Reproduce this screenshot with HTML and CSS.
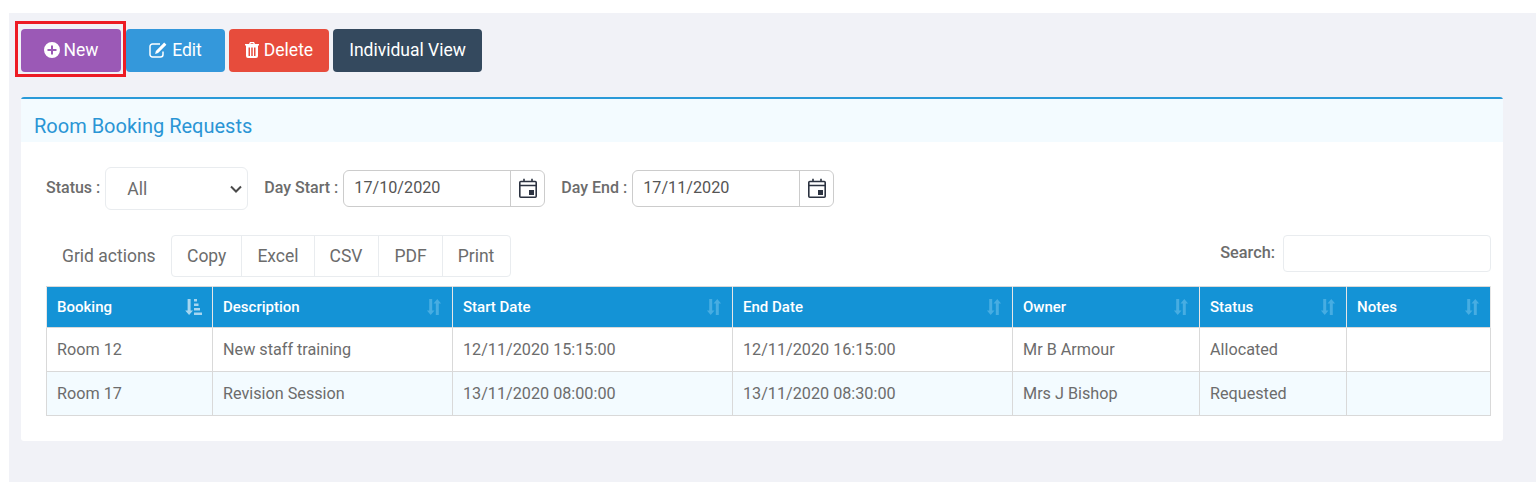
FILE: index.html
```html
<!DOCTYPE html>
<html lang="en">
<head>
    <meta charset="UTF-8">
    <title>Room Booking Requests</title>
    <link rel="stylesheet" href="styles.css">
</head>
<body>
    <div class="page">
        <div class="toolbar">
            <button class="btn btn-new">
                <svg class="btn-icon" viewBox="0 0 16 16"><path fill="currentColor" fill-rule="evenodd" d="M8 0a8 8 0 1 1 0 16A8 8 0 0 1 8 0zM7 3.500v3.500H3.500v2H7v3.500h2V9h3.500V7H9V3.500z"/></svg>
                <span class="btn-text">New</span>
            </button>
            <button class="btn btn-edit">
                <svg class="btn-icon btn-icon-wide" viewBox="0 0 18 16"><path fill="none" stroke="currentColor" stroke-width="1.500" d="M14 9.500v3a2.500 2.500 0 0 1-2.500 2.500h-8A2.500 2.500 0 0 1 1 12.500v-8A2.500 2.500 0 0 1 3.500 2H11"/><path fill="currentColor" d="M15.200 .6l2.200 2.200-8.300 8.300-3 .8.800-3z"/></svg>
                <span class="btn-text">Edit</span>
            </button>
            <button class="btn btn-delete">
                <svg class="btn-icon btn-icon-trash" viewBox="0 0 14 16"><path fill="currentColor" fill-rule="evenodd" d="M5 0h4l1 2h4v1.500h-1V14a2 2 0 0 1-2 2H3a2 2 0 0 1-2-2V3.500H0V2h4zM5.500 2h3L8.200 1.200H5.800zM3.500 5.500V14h1.500V5.500zM6.250 5.500V14h1.500V5.500zM9 5.500V14h1.500V5.500z"/></svg>
                <span class="btn-text">Delete</span>
            </button>
            <button class="btn btn-view"><span class="btn-text">Individual View</span></button>
        </div>

        <div class="panel">
            <div class="panel-head">Room Booking Requests</div>
            <div class="panel-body">
                <div class="filters">
                    <label class="filter-label">Status :</label>
                    <div class="status-select">
                        <span>All</span>
                        <svg class="chevron" viewBox="0 0 12 8"><path fill="none" stroke="currentColor" stroke-width="2" d="M1 1.500l5 5 5-5"/></svg>
                    </div>
                    <label class="filter-label label-gap">Day Start :</label>
                    <div class="date-group">
                        <div class="date-value">17/10/2020</div>
                        <div class="date-addon">
                            <svg class="cal" viewBox="0 0 18 20"><path fill="none" stroke="#2b3240" stroke-width="1.600" d="M1.800 3.500h14.400a1 1 0 0 1 1 1v13.700a1 1 0 0 1-1 1H1.800a1 1 0 0 1-1-1V4.500a1 1 0 0 1 1-1zM1 7.500h16M5 .8v3M13 .8v3"/><path fill="#2b3240" d="M10 12h5v5h-5z"/></svg>
                        </div>
                    </div>
                    <label class="filter-label label-gap">Day End :</label>
                    <div class="date-group">
                        <div class="date-value">17/11/2020</div>
                        <div class="date-addon">
                            <svg class="cal" viewBox="0 0 18 20"><path fill="none" stroke="#2b3240" stroke-width="1.600" d="M1.800 3.500h14.400a1 1 0 0 1 1 1v13.700a1 1 0 0 1-1 1H1.800a1 1 0 0 1-1-1V4.500a1 1 0 0 1 1-1zM1 7.500h16M5 .8v3M13 .8v3"/><path fill="#2b3240" d="M10 12h5v5h-5z"/></svg>
                        </div>
                    </div>
                </div>

                <div class="grid-actions">
                    <span class="grid-title">Grid actions</span>
                    <div class="grid-buttons">
                        <span class="grid-btn">Copy</span>
                        <span class="grid-btn">Excel</span>
                        <span class="grid-btn">CSV</span>
                        <span class="grid-btn">PDF</span>
                        <span class="grid-btn">Print</span>
                    </div>
                    <label class="search-label">Search:</label>
                    <div class="search-box"></div>
                </div>

                <table class="grid">
                    <colgroup>
                        <col class="col-1"><col class="col-2"><col class="col-3"><col class="col-4"><col class="col-5"><col class="col-6"><col class="col-7">
                    </colgroup>
                    <thead>
                        <tr>
                            <th><div class="th-inner">Booking<svg class="sort sort-active" viewBox="0 0 18 16"><path d="M3.600 0h3v11.500h2.400L5.100 16 1.200 11.500h2.400zM10 0h3v2.500h-3zM10 4.500h4.500V7H10zM10 9h6v2.500h-6zM10 13.500h8V16h-8z"/></svg></div></th>
                            <th><div class="th-inner">Description<svg class="sort" viewBox="0 0 16 16"><path d="M3.200 0h3v11.500h2.300L4.700 16 .9 11.500h2.300zM9.800 16h3V4.500h2.300L11.300 0 7.500 4.500h2.300z"/></svg></div></th>
                            <th><div class="th-inner">Start Date<svg class="sort" viewBox="0 0 16 16"><path d="M3.200 0h3v11.500h2.300L4.700 16 .9 11.500h2.300zM9.800 16h3V4.500h2.300L11.300 0 7.500 4.500h2.300z"/></svg></div></th>
                            <th><div class="th-inner">End Date<svg class="sort" viewBox="0 0 16 16"><path d="M3.200 0h3v11.500h2.300L4.700 16 .9 11.500h2.300zM9.800 16h3V4.500h2.300L11.300 0 7.500 4.500h2.300z"/></svg></div></th>
                            <th><div class="th-inner">Owner<svg class="sort" viewBox="0 0 16 16"><path d="M3.200 0h3v11.500h2.300L4.700 16 .9 11.500h2.300zM9.800 16h3V4.500h2.300L11.300 0 7.500 4.500h2.300z"/></svg></div></th>
                            <th><div class="th-inner">Status<svg class="sort" viewBox="0 0 16 16"><path d="M3.200 0h3v11.500h2.300L4.700 16 .9 11.500h2.300zM9.800 16h3V4.500h2.300L11.300 0 7.500 4.500h2.300z"/></svg></div></th>
                            <th><div class="th-inner">Notes<svg class="sort" viewBox="0 0 16 16"><path d="M3.200 0h3v11.500h2.300L4.700 16 .9 11.500h2.300zM9.800 16h3V4.500h2.300L11.300 0 7.500 4.500h2.300z"/></svg></div></th>
                        </tr>
                    </thead>
                    <tbody>
                        <tr>
                            <td>Room 12</td>
                            <td>New staff training</td>
                            <td>12/11/2020 15:15:00</td>
                            <td>12/11/2020 16:15:00</td>
                            <td>Mr B Armour</td>
                            <td>Allocated</td>
                            <td></td>
                        </tr>
                        <tr class="row-alt">
                            <td>Room 17</td>
                            <td>Revision Session</td>
                            <td>13/11/2020 08:00:00</td>
                            <td>13/11/2020 08:30:00</td>
                            <td>Mrs J Bishop</td>
                            <td>Requested</td>
                            <td></td>
                        </tr>
                    </tbody>
                </table>
            </div>
        </div>
    </div>
</body>
</html>
```

FILE: styles.css
```css
html, body {
    margin: 0;
    background-color: #fff;
}
body {
    font-family: Roboto, "Liberation Sans", sans-serif;
    font-size: 16.2px;
    color: #6c6c6c;
    height: 503px;
    overflow: hidden;
}
.page {
    margin: 13px 0 0 9px;
    padding: 16px 33px 41px 12px;
    background-color: #f1f2f7;
}
.toolbar {
    display: flex;
    gap: 4px;
    margin-bottom: 25px;
}
.btn {
    position: relative;
    height: 43px;
    border: none;
    border-radius: 4px;
    color: #fff;
    font-family: inherit;
    font-size: 17.5px;
    display: flex;
    align-items: center;
    justify-content: center;
    gap: 4px;
    padding: 0;
}
.btn-text {
    margin-top: -2px;
}
.btn-icon {
    width: 16px;
    height: 16px;
    margin-top: -2px;
}
.btn-icon-wide {
    width: 18px;
}
.btn-icon-trash {
    width: 14px;
}
.btn-new {
    width: 100px;
    background-color: #9b59b6;
}
/* red highlight drawn around the first button */
.btn-new:after {
    content: "";
    position: absolute;
    top: -8px;
    left: -6px;
    right: -5px;
    bottom: -5px;
    border: 3px solid #ed1c24;
}
.btn-edit {
    width: 99px;
    margin-left: 1px;
    gap: 5px;
    background-color: #3498db;
}
.btn-delete {
    width: 100px;
    gap: 5px;
    background-color: #e74c3c;
}
.btn-view {
    width: 149px;
    background-color: #34495e;
}
.panel {
    border-top: 2px solid #2a9ad8;
    border-radius: 3px;
    background-color: #fff;
}
.panel-head {
    height: 43px;
    padding: 16px 13px 0;
    box-sizing: border-box;
    background-color: #f3fbff;
    color: #2a95d5;
    font-size: 20px;
    line-height: 23px;
}
.panel-body {
    padding: 25px 12px 25px 25px;
}
.filters {
    display: flex;
    align-items: center;
    height: 43px;
}
.filter-label {
    font-size: 16px;
    font-weight: 500;
    margin-right: 5px;
    margin-top: -3px;
}
.label-gap {
    margin-left: 16px;
}
.status-select {
    width: 143px;
    height: 43px;
    box-sizing: border-box;
    border: 1px solid #e9ecef;
    border-radius: 6px;
    display: flex;
    align-items: center;
    justify-content: space-between;
    padding: 0 5px 0 21px;
    font-size: 17.5px;
}
.chevron {
    width: 12px;
    height: 8px;
    color: #4a4a4a;
}
.date-group {
    display: flex;
    height: 37px;
    box-sizing: border-box;
    border: 1px solid #ccc;
    border-radius: 6px;
}
.date-value {
    width: 166px;
    padding-left: 10px;
    box-sizing: border-box;
    line-height: 33px;
    color: #555;
}
.date-addon {
    width: 33px;
    border-left: 1px solid #ccc;
    display: flex;
    align-items: center;
    justify-content: center;
}
.cal {
    width: 18px;
    height: 20px;
    margin: -2px 0 0 1px;
}
.grid-actions {
    display: flex;
    align-items: flex-start;
    margin-top: 25px;
    height: 51px;
}
.grid-title {
    width: 125px;
    padding-left: 16px;
    box-sizing: border-box;
    line-height: 42px;
    font-size: 17.5px;
}
.grid-buttons {
    display: flex;
    height: 42px;
    box-sizing: border-box;
    border: 1px solid #e9ecef;
    border-radius: 4px;
}
.grid-btn {
    line-height: 40px;
    font-size: 17.5px;
    padding: 0 15px;
    border-left: 1px solid #e9ecef;
}
.grid-btn:first-child {
    border-left: none;
}
.grid-btn:nth-child(3) {
    padding-right: 16px;
}
.grid-btn:last-child {
    padding-right: 16px;
}
.search-label {
    margin-left: auto;
    margin-right: 8px;
    font-size: 16.3px;
    font-weight: 500;
    line-height: 36px;
}
.search-box {
    width: 208px;
    height: 37px;
    box-sizing: border-box;
    border: 1px solid #e9ecef;
    border-radius: 4px;
}
.grid {
    width: 1444px;
    border-collapse: collapse;
    table-layout: fixed;
    border: 1px solid #d9d9d9;
}
.col-1 { width: 166px; }
.col-2 { width: 240px; }
.col-3 { width: 280px; }
.col-4 { width: 280px; }
.col-5 { width: 187px; }
.col-6 { width: 147px; }
.col-7 { width: 144px; }
.grid th {
    height: 41px;
    padding: 0 10px;
    box-sizing: border-box;
    background-color: #1493d6;
    color: #fff;
    font-size: 15px;
    font-weight: 500;
    text-align: left;
    border: 1px solid #e6e6e6;
    border-top-color: #d9d9d9;
    border-bottom: none;
}
.th-inner {
    display: flex;
    align-items: center;
    justify-content: space-between;
}
.sort {
    width: 16px;
    height: 16px;
    fill: #47ade2;
}
.sort-active {
    width: 18px;
    fill: #a6d6f0;
}
.grid td {
    height: 44px;
    padding: 0 10px;
    box-sizing: border-box;
    border: 1px solid #d9d9d9;
}
.row-alt td {
    background-color: #f3fbff;
}
```
